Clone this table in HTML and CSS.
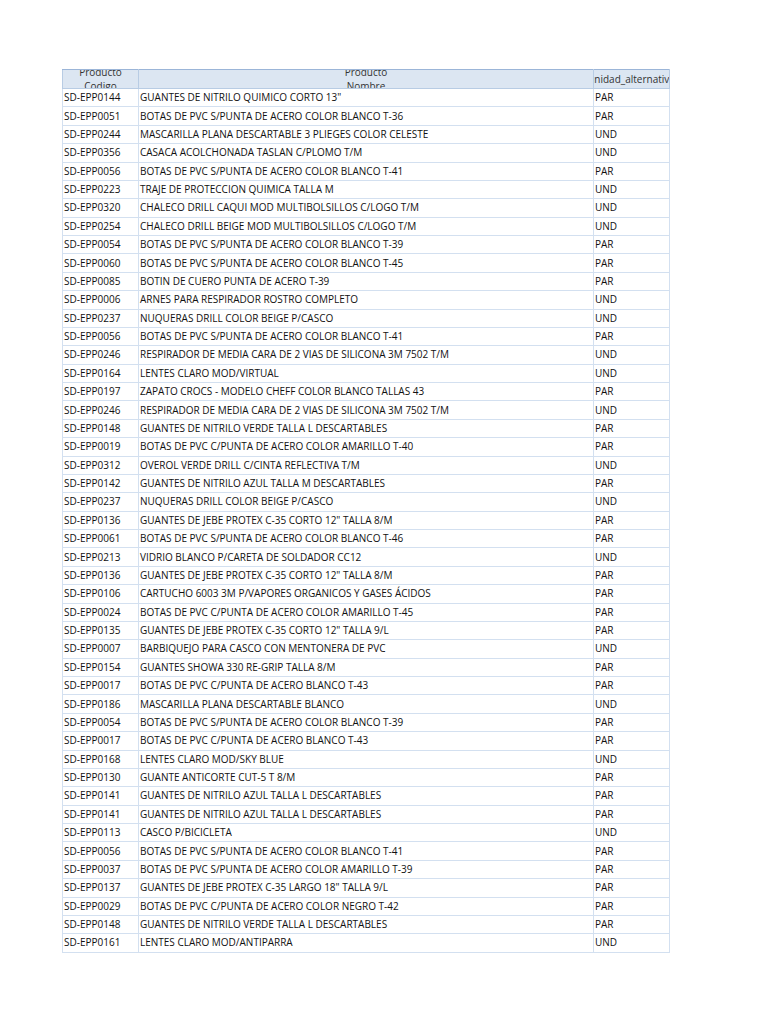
FILE: index.html
```html
<!DOCTYPE html>
<html>
<head>
<meta charset="utf-8">
<link rel="stylesheet" href="styles.css">
</head>
<body>
<table class="grid">
<colgroup><col class="c1"><col class="c2"><col class="c3"></colgroup>
<thead>
<tr>
<th><div class="hd"><span>Producto<br>Codigo</span></div></th>
<th><div class="hd"><span>Producto<br>Nombre</span></div></th>
<th><div class="hd"><span>unidad_alternativa</span></div></th>
</tr>
</thead>
<tbody>
<tr><td>SD-EPP0144</td><td>GUANTES DE NITRILO QUIMICO CORTO 13"</td><td>PAR</td></tr>
<tr><td>SD-EPP0051</td><td>BOTAS DE PVC S/PUNTA DE ACERO COLOR BLANCO T-36</td><td>PAR</td></tr>
<tr><td>SD-EPP0244</td><td>MASCARILLA PLANA DESCARTABLE 3 PLIEGES COLOR CELESTE</td><td>UND</td></tr>
<tr><td>SD-EPP0356</td><td>CASACA ACOLCHONADA TASLAN C/PLOMO T/M</td><td>UND</td></tr>
<tr><td>SD-EPP0056</td><td>BOTAS DE PVC S/PUNTA DE ACERO COLOR BLANCO T-41</td><td>PAR</td></tr>
<tr><td>SD-EPP0223</td><td>TRAJE DE PROTECCION QUIMICA TALLA M</td><td>UND</td></tr>
<tr><td>SD-EPP0320</td><td>CHALECO DRILL CAQUI MOD MULTIBOLSILLOS C/LOGO T/M</td><td>UND</td></tr>
<tr><td>SD-EPP0254</td><td>CHALECO DRILL BEIGE MOD MULTIBOLSILLOS C/LOGO T/M</td><td>UND</td></tr>
<tr><td>SD-EPP0054</td><td>BOTAS DE PVC S/PUNTA DE ACERO COLOR BLANCO T-39</td><td>PAR</td></tr>
<tr><td>SD-EPP0060</td><td>BOTAS DE PVC S/PUNTA DE ACERO COLOR BLANCO T-45</td><td>PAR</td></tr>
<tr><td>SD-EPP0085</td><td>BOTIN DE CUERO PUNTA DE ACERO T-39</td><td>PAR</td></tr>
<tr><td>SD-EPP0006</td><td>ARNES PARA RESPIRADOR ROSTRO COMPLETO</td><td>UND</td></tr>
<tr><td>SD-EPP0237</td><td>NUQUERAS DRILL COLOR BEIGE P/CASCO</td><td>UND</td></tr>
<tr><td>SD-EPP0056</td><td>BOTAS DE PVC S/PUNTA DE ACERO COLOR BLANCO T-41</td><td>PAR</td></tr>
<tr><td>SD-EPP0246</td><td>RESPIRADOR DE MEDIA CARA DE 2 VIAS DE SILICONA 3M 7502 T/M</td><td>UND</td></tr>
<tr><td>SD-EPP0164</td><td>LENTES CLARO MOD/VIRTUAL</td><td>UND</td></tr>
<tr><td>SD-EPP0197</td><td>ZAPATO CROCS - MODELO CHEFF COLOR BLANCO TALLAS 43</td><td>PAR</td></tr>
<tr><td>SD-EPP0246</td><td>RESPIRADOR DE MEDIA CARA DE 2 VIAS DE SILICONA 3M 7502 T/M</td><td>UND</td></tr>
<tr><td>SD-EPP0148</td><td>GUANTES DE NITRILO VERDE TALLA L DESCARTABLES</td><td>PAR</td></tr>
<tr><td>SD-EPP0019</td><td>BOTAS DE PVC C/PUNTA DE ACERO COLOR AMARILLO T-40</td><td>PAR</td></tr>
<tr><td>SD-EPP0312</td><td>OVEROL VERDE DRILL C/CINTA REFLECTIVA T/M</td><td>UND</td></tr>
<tr><td>SD-EPP0142</td><td>GUANTES DE NITRILO AZUL TALLA M DESCARTABLES</td><td>PAR</td></tr>
<tr><td>SD-EPP0237</td><td>NUQUERAS DRILL COLOR BEIGE P/CASCO</td><td>UND</td></tr>
<tr><td>SD-EPP0136</td><td>GUANTES DE JEBE PROTEX C-35 CORTO 12" TALLA 8/M</td><td>PAR</td></tr>
<tr><td>SD-EPP0061</td><td>BOTAS DE PVC S/PUNTA DE ACERO COLOR BLANCO T-46</td><td>PAR</td></tr>
<tr><td>SD-EPP0213</td><td>VIDRIO BLANCO P/CARETA DE SOLDADOR CC12</td><td>UND</td></tr>
<tr><td>SD-EPP0136</td><td>GUANTES DE JEBE PROTEX C-35 CORTO 12" TALLA 8/M</td><td>PAR</td></tr>
<tr><td>SD-EPP0106</td><td>CARTUCHO 6003 3M P/VAPORES ORGANICOS Y GASES ÁCIDOS</td><td>PAR</td></tr>
<tr><td>SD-EPP0024</td><td>BOTAS DE PVC C/PUNTA DE ACERO COLOR AMARILLO T-45</td><td>PAR</td></tr>
<tr><td>SD-EPP0135</td><td>GUANTES DE JEBE PROTEX C-35 CORTO 12" TALLA 9/L</td><td>PAR</td></tr>
<tr><td>SD-EPP0007</td><td>BARBIQUEJO PARA CASCO CON MENTONERA DE PVC</td><td>UND</td></tr>
<tr><td>SD-EPP0154</td><td>GUANTES SHOWA 330 RE-GRIP TALLA 8/M</td><td>PAR</td></tr>
<tr><td>SD-EPP0017</td><td>BOTAS DE PVC C/PUNTA DE ACERO BLANCO T-43</td><td>PAR</td></tr>
<tr><td>SD-EPP0186</td><td>MASCARILLA PLANA DESCARTABLE BLANCO</td><td>UND</td></tr>
<tr><td>SD-EPP0054</td><td>BOTAS DE PVC S/PUNTA DE ACERO COLOR BLANCO T-39</td><td>PAR</td></tr>
<tr><td>SD-EPP0017</td><td>BOTAS DE PVC C/PUNTA DE ACERO BLANCO T-43</td><td>PAR</td></tr>
<tr><td>SD-EPP0168</td><td>LENTES CLARO MOD/SKY BLUE</td><td>UND</td></tr>
<tr><td>SD-EPP0130</td><td>GUANTE ANTICORTE CUT-5 T 8/M</td><td>PAR</td></tr>
<tr><td>SD-EPP0141</td><td>GUANTES DE NITRILO AZUL TALLA L DESCARTABLES</td><td>PAR</td></tr>
<tr><td>SD-EPP0141</td><td>GUANTES DE NITRILO AZUL TALLA L DESCARTABLES</td><td>PAR</td></tr>
<tr><td>SD-EPP0113</td><td>CASCO P/BICICLETA</td><td>UND</td></tr>
<tr><td>SD-EPP0056</td><td>BOTAS DE PVC S/PUNTA DE ACERO COLOR BLANCO T-41</td><td>PAR</td></tr>
<tr><td>SD-EPP0037</td><td>BOTAS DE PVC S/PUNTA DE ACERO COLOR AMARILLO T-39</td><td>PAR</td></tr>
<tr><td>SD-EPP0137</td><td>GUANTES DE JEBE PROTEX C-35 LARGO 18" TALLA 9/L</td><td>PAR</td></tr>
<tr><td>SD-EPP0029</td><td>BOTAS DE PVC C/PUNTA DE ACERO COLOR NEGRO T-42</td><td>PAR</td></tr>
<tr><td>SD-EPP0148</td><td>GUANTES DE NITRILO VERDE TALLA L DESCARTABLES</td><td>PAR</td></tr>
<tr><td>SD-EPP0161</td><td>LENTES CLARO MOD/ANTIPARRA</td><td>UND</td></tr>
</tbody>
</table>
</body>
</html>
```

FILE: styles.css
```css
html, body {
  margin: 0;
  padding: 0;
  background: #ffffff;
}
body {
  padding: 69px 0 0 62px;
  font-family: "Open Sans", "Noto Sans", sans-serif;
  font-size: 10px;
  color: #111111;
}
.grid {
  border-collapse: collapse;
  table-layout: fixed;
  width: 607px;
}
.c1 { width: 76px; }
.c2 { width: 455px; }
.c3 { width: 76px; }
.grid th {
  background: #dce6f2;
  border: 1px solid #b8cce4;
  border-top-color: #9bb5d8;
  height: 18px;
  padding: 0;
  font-weight: normal;
  color: #333333;
  overflow: hidden;
}
.hd {
  height: 18px;
  display: flex;
  justify-content: center;
  align-items: center;
  overflow: hidden;
  line-height: 14px;
  white-space: nowrap;
}
.hd span { display: block; text-align: center; }
.grid td {
  border: 1px solid #d3e0f0;
  height: 17.38px;
  padding: 0 0 0 1px;
  line-height: 17px;
  white-space: nowrap;
  overflow: hidden;
}
```
